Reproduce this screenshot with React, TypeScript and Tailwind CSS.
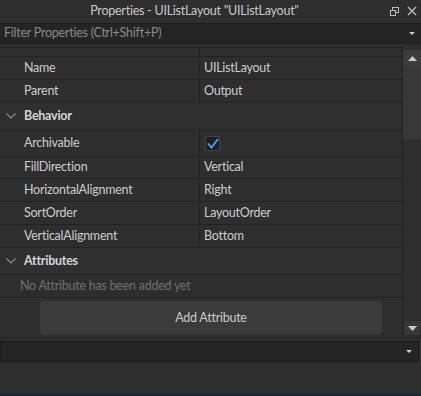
import React from 'react';

const font = { fontFamily: '"Source Sans Pro", Lato, "Noto Sans", sans-serif' };

function Chevron() {
  return (
    <svg width="10" height="6" viewBox="0 0 10 6" className="ml-[6px] mr-[8px]">
      <path d="M0.5 0.5 L5 5 L9.5 0.5" fill="none" stroke="#8a8a8a" strokeWidth="1.2" />
    </svg>
  );
}

function Row({ name, value, h = 'h-[23px]', children }: { name: string; value?: string; h?: string; children?: React.ReactNode }) {
  return (
    <div className={`flex ${h} border-b border-[#222222]`}>
      <div className="w-[200px] pl-[24px] flex items-center border-r border-[#222222] text-[#cccccc]">{name}</div>
      <div className="flex-1 pl-[4px] flex items-center text-[#cccccc]">{children ?? value}</div>
    </div>
  );
}

function Header({ title }: { title: string }) {
  return (
    <div className="flex items-center h-[27px] border-b border-[#222222] bg-[#303030]">
      <Chevron />
      <span className="font-bold text-[#d4d4d4]">{title}</span>
    </div>
  );
}

export default function App() {
  return (
    <div className="w-[421px] h-[396px] bg-[#2e2e2e] flex flex-col text-[12.5px] tracking-[-0.25px] overflow-hidden" style={font}>
      {/* Title bar */}
      <div className="h-[23px] flex items-center relative shrink-0">
        <div className="flex-1 text-center pr-[32px] text-[#c8c8c8]">Properties - UIListLayout "UIListLayout"</div>
        <div className="absolute right-[4px] top-[6px] flex items-center gap-[8px]">
          <svg width="9" height="9" viewBox="0 0 9 9">
            <rect x="2.5" y="0.5" width="6" height="5" fill="none" stroke="#bdbdbd" />
            <rect x="0.5" y="3.5" width="5" height="5" fill="#2e2e2e" stroke="#bdbdbd" />
          </svg>
          <svg width="10" height="10" viewBox="0 0 10 10">
            <path d="M1 1 L9 9 M9 1 L1 9" stroke="#bdbdbd" strokeWidth="1.3" />
          </svg>
        </div>
      </div>

      {/* Filter */}
      <div className="h-[21px] shrink-0 bg-[#252525] border-y border-[#1e1e1e] flex items-center pl-[4px] pr-[6px]">
        <span className="flex-1 text-[#8a8a8a]">Filter Properties (Ctrl+Shift+P)</span>
        <svg width="6" height="3" viewBox="0 0 6 3"><path d="M0 0 L6 0 L3 3 Z" fill="#c8c8c8" /></svg>
      </div>

      {/* Properties list + scrollbar */}
      <div className="mt-[3px] h-[291px] shrink-0 flex border-b border-[#222222]">
        <div className="w-[403px] border-r border-[#222222] flex flex-col">
          <div className="flex h-[10px] border-y border-[#222222]">
            <div className="w-[200px] border-r border-[#222222]" />
            <div className="flex-1" />
          </div>
          <Row name="Name" value="UIListLayout" />
          <Row name="Parent" value="Output" />
          <Header title="Behavior" />
          <Row name="Archivable" h="h-[27px]">
            <div className="ml-[1px] w-[15px] h-[15px] bg-[#1f1f1f] border border-[#454545] flex items-center justify-center">
              <svg width="12" height="11" viewBox="0 0 12 11">
                <path d="M1 5.5 L4.5 9.5 L11 1" fill="none" stroke="#3ea9f5" strokeWidth="1.8" />
              </svg>
            </div>
          </Row>
          <Row name="FillDirection" value="Vertical" h="h-[22px]" />
          <Row name="HorizontalAlignment" value="Right" />
          <Row name="SortOrder" value="LayoutOrder" />
          <Row name="VerticalAlignment" value="Bottom" />
          <Header title="Attributes" />
          <div className="h-[23px] border-b border-[#222222] flex items-center pl-[20px] text-[#707070]">
            No Attribute has been added yet
          </div>
          <div className="pl-[40px] pr-[20px] pt-[3px]">
            <div className="h-[34px] rounded-[4px] bg-[#3b3b3b] flex items-center justify-center text-[#cccccc]">
              Add Attribute
            </div>
          </div>
        </div>
        <div className="flex-1 flex flex-col pt-[3px]">
          <div className="h-[16px] bg-[#3c3c3c] flex items-center justify-center">
            <svg width="9" height="5" viewBox="0 0 9 5"><path d="M0 5 L9 5 L4.5 0 Z" fill="#c8c8c8" /></svg>
          </div>
          <div className="h-[73px] bg-[#393939]" />
          <div className="flex-1" />
          <div className="h-[16px] mb-[1px] bg-[#393939] border border-[#2a2a2a] flex items-center justify-center">
            <svg width="9" height="5" viewBox="0 0 9 5"><path d="M0 0 L9 0 L4.5 5 Z" fill="#c8c8c8" /></svg>
          </div>
        </div>
      </div>

      {/* Bottom dropdown */}
      <div className="mt-[3px] h-[21px] mr-[2px] shrink-0 bg-[#252525] border border-[#1b1b1b] flex items-center justify-end pr-[6px]">
        <svg width="6" height="3" viewBox="0 0 6 3"><path d="M0 0 L6 0 L3 3 Z" fill="#c8c8c8" /></svg>
      </div>
      <div className="flex-1" />
      <div className="h-[2px] bg-[#0f2a3c] shrink-0" />
    </div>
  );
}
